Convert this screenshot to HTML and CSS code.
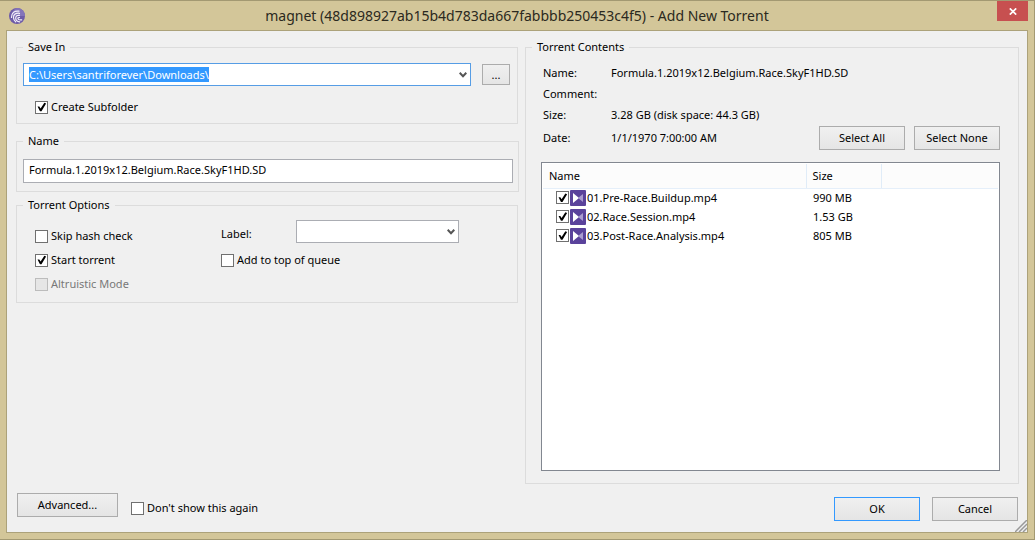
FILE: index.html
```
<!DOCTYPE html>
<html lang="en">
<head>
<meta charset="utf-8">
<title>Add New Torrent</title>
<link rel="stylesheet" href="styles.css">
</head>
<body>
<div class="window">
  <header class="titlebar">
    <svg class="app-icon" viewBox="0 0 16 16" aria-hidden="true">
      <circle cx="8" cy="8" r="8" fill="#6d5ba8"/>
      <path d="M8 0a8 8 0 0 1 8 8H3a8 8 0 0 1 5-8z" fill="#8474ba"/>
      <g fill="none" stroke="#f4f1fb" stroke-width="1.2" stroke-linecap="round">
        <path d="M10 3.2C5.500 2.500 2.200 5 2.500 9.500"/>
        <path d="M10.500 5.300C7 4.700 4.300 6.500 4.500 9.800c.1 1.700 1 3 2.200 4"/>
        <path d="M10.500 7.400C8.500 7 6.700 8 6.700 10c0 2 1.600 3.600 4 3.800"/>
        <path d="M10.500 9.500c-1-.1-1.700.3-1.600 1.100.2 1 1.800 1.500 3.800 1.200"/>
      </g>
    </svg>
    <h1 class="title">magnet (48d898927ab15b4d783da667fabbbb250453c4f5) - Add New Torrent</h1>
    <button class="close" type="button" aria-label="Close">
      <svg width="8" height="7" viewBox="0 0 8 7" aria-hidden="true"><path d="M.8.4l6.400 6.200M7.200.4L.8 6.600" stroke="#fff" stroke-width="1.700"/></svg>
    </button>
  </header>

  <form class="client">
    <div class="columns">
      <div class="column">
        <fieldset class="group save-in">
          <legend>Save In</legend>
          <div class="path-row">
            <div class="combo focused">
              <input id="path" class="field" type="text" role="combobox" aria-label="Save in folder" aria-expanded="false" value="C:\Users\santriforever\Downloads\">
              <svg class="chevron" viewBox="0 0 8 6" aria-hidden="true"><path d="M.7.8L4 4.300 7.300.8" fill="none" stroke="#555" stroke-width="2"/></svg>
            </div>
            <button class="button browse" type="button" aria-label="Browse">...</button>
          </div>
          <label class="check"><input type="checkbox" checked>Create Subfolder</label>
        </fieldset>

        <fieldset class="group name">
          <legend>Name</legend>
          <input class="field name-field" type="text" aria-label="Name" value="Formula.1.2019x12.Belgium.Race.SkyF1HD.SD">
        </fieldset>

        <fieldset class="group options">
          <legend>Torrent Options</legend>
          <div class="options-grid">
            <label class="check first"><input type="checkbox">Skip hash check</label>
            <div class="label-row">
              <label for="label">Label:</label>
              <div class="combo">
                <select id="label" class="field"><option></option></select>
                <svg class="chevron" viewBox="0 0 8 6" aria-hidden="true"><path d="M.7.8L4 4.300 7.300.8" fill="none" stroke="#555" stroke-width="2"/></svg>
              </div>
            </div>
            <label class="check"><input type="checkbox" checked>Start torrent</label>
            <label class="check"><input type="checkbox">Add to top of queue</label>
            <label class="check disabled"><input type="checkbox" disabled>Altruistic Mode</label>
          </div>
        </fieldset>
      </div>

      <fieldset class="group contents">
        <legend>Torrent Contents</legend>
        <div class="contents-body">
          <div class="summary">
            <dl class="details">
              <dt>Name:</dt><dd>Formula.1.2019x12.Belgium.Race.SkyF1HD.SD</dd>
              <dt>Comment:</dt><dd></dd>
              <dt>Size:</dt><dd>3.28 GB (disk space: 44.3 GB)</dd>
              <dt>Date:</dt><dd>1/1/1970 7:00:00 AM</dd>
            </dl>
            <div class="select-buttons">
              <button class="button" type="button">Select All</button>
              <button class="button" type="button">Select None</button>
            </div>
          </div>
          <div class="list">
            <table class="files">
              <thead>
                <tr><th class="col-name">Name</th><th class="col-size">Size</th><th></th></tr>
              </thead>
              <tbody>
                <tr>
                  <td><label class="file"><input type="checkbox" checked><svg class="file-icon" viewBox="0 0 16 16" aria-hidden="true"><rect width="16" height="16" rx="1" fill="#5a429b"/><path d="M3 3l6 5-6 5z" fill="#fff"/><path d="M13 4v8L8 8z" fill="#a99bd0"/></svg>01.Pre-Race.Buildup.mp4</label></td>
                  <td>990 MB</td><td></td>
                </tr>
                <tr>
                  <td><label class="file"><input type="checkbox" checked><svg class="file-icon" viewBox="0 0 16 16" aria-hidden="true"><rect width="16" height="16" rx="1" fill="#5a429b"/><path d="M3 3l6 5-6 5z" fill="#fff"/><path d="M13 4v8L8 8z" fill="#a99bd0"/></svg>02.Race.Session.mp4</label></td>
                  <td>1.53 GB</td><td></td>
                </tr>
                <tr>
                  <td><label class="file"><input type="checkbox" checked><svg class="file-icon" viewBox="0 0 16 16" aria-hidden="true"><rect width="16" height="16" rx="1" fill="#5a429b"/><path d="M3 3l6 5-6 5z" fill="#fff"/><path d="M13 4v8L8 8z" fill="#a99bd0"/></svg>03.Post-Race.Analysis.mp4</label></td>
                  <td>805 MB</td><td></td>
                </tr>
              </tbody>
            </table>
          </div>
        </div>
      </fieldset>
    </div>

    <footer class="footer">
      <div class="footer-left">
        <button class="button advanced" type="button">Advanced...</button>
        <label class="check"><input type="checkbox">Don't show this again</label>
      </div>
      <div class="footer-right">
        <button class="button primary" type="button">OK</button>
        <button class="button" type="button">Cancel</button>
      </div>
    </footer>
    <svg class="grip" viewBox="0 0 12 12" aria-hidden="true">
      <path d="M0 12L12 0M4 12l8-8M8 12l4-4" stroke="#999" stroke-width="1.500"/>
    </svg>
  </form>
</div>
<script src="main.js"></script>
</body>
</html>
```
FILE: styles.css
```
* {
  box-sizing: border-box;
}

body {
  margin: 0;
  font: 11px/16px "Noto Sans", "Open Sans", sans-serif;
  color: #000;
}

button,
input,
select {
  font: inherit;
  color: inherit;
  margin: 0;
  border-radius: 0;
}

.window {
  display: flex;
  flex-direction: column;
  min-height: 100vh;
  padding: 0 6px 6px;
  background: #d3c699;
  border: solid #a39972;
  border-width: 1px 1px 1px 0;
}

/* Title bar */
.titlebar {
  display: grid;
  grid-template-columns: 1fr auto 1fr;
  align-items: center;
  height: 29px;
}

.app-icon {
  width: 16px;
  height: 16px;
  margin-left: 3px;
}

.title {
  margin: 0;
  font-size: 14px;
  font-weight: 400;
  line-height: 20px;
  color: #2b2920;
  white-space: nowrap;
}

.close {
  display: flex;
  align-items: center;
  justify-content: center;
  justify-self: end;
  align-self: start;
  width: 31px;
  height: 20px;
  padding: 0;
  border: 0;
  background: #c75050;
}

/* Dialog body */
.client {
  position: relative;
  display: flex;
  flex-direction: column;
  flex: 1;
  padding: 8px 8px 11px 9px;
  background: #f0f0f0;
  border: 1px solid #aca27a;
}

.columns {
  display: grid;
  grid-template-columns: minmax(0, 503fr) minmax(0, 494fr);
  gap: 6px;
  flex: 1;
}

.group {
  min-width: 0;
  margin: 0;
  padding: 0;
  border: 1px solid #dcdcdc;
}

.group legend {
  height: 16px;
  padding: 0 5px;
}

.save-in {
  margin-right: 1px;
  padding: 8px 7px 4px 6px;
}

.name {
  margin-top: 9px;
  padding: 10px 5px 8px 6px;
}

.options {
  margin: 5px 1px 0 0;
  padding: 7px 6px 5px;
}

.path-row {
  display: flex;
  align-items: center;
  gap: 11px;
  margin-bottom: 9px;
}

.path-row .combo {
  flex: 1;
}

.save-in .check {
  margin-left: 12px;
}

.combo {
  position: relative;
  display: flex;
}

.field {
  width: 100%;
  height: 23px;
  padding: 0 5px;
  background: #fff;
  border: 1px solid #abadb3;
  outline: 0;
  appearance: none;
}

.focused .field {
  border-color: #569de5;
}

.field::selection {
  background: #39f;
  color: #fff;
}

.name-field {
  display: block;
  height: 24px;
  padding-bottom: 3px;
}

.chevron {
  position: absolute;
  top: 9px;
  right: 4px;
  width: 8px;
  height: 6px;
  pointer-events: none;
}

/* Check boxes */
.check {
  display: flex;
  align-items: center;
  gap: 3px;
  height: 24px;
}

input[type="checkbox"] {
  flex: none;
  width: 13px;
  height: 13px;
  appearance: none;
  background: #fff;
  border: 1px solid #707070;
}

input[type="checkbox"]:checked::after {
  content: "";
  display: block;
  width: 11px;
  height: 11px;
  background: #000;
  clip-path: polygon(14% 46%, 30% 46%, 42% 64%, 76% 12%, 92% 18%, 50% 88%, 36% 88%);
}

input[type="checkbox"]:disabled {
  background: #e6e6e6;
  border-color: #bcbcbc;
}

.disabled {
  color: #787878;
}

.options-grid {
  display: grid;
  grid-template-columns: 186px 1fr;
  grid-template-rows: 28px 24px 25px;
  margin-left: 12px;
}

.first {
  align-self: end;
}

.label-row {
  display: flex;
  align-items: center;
  align-self: start;
}

.label-row label {
  width: 75px;
  padding-top: 4px;
}

.label-row .combo {
  width: 163px;
}

/* Buttons */
.button {
  width: 86px;
  height: 24px;
  padding: 0;
  background: linear-gradient(#f0f0f0, #e5e5e5);
  border: 1px solid #acacac;
}

.browse {
  width: 28px;
  height: 21px;
}

.advanced {
  width: 101px;
}

.primary {
  border-color: #39f;
}

/* Torrent contents */
.contents {
  padding: 8px 18px 12px 6px;
}

.contents-body {
  display: flex;
  flex-direction: column;
  gap: 12px;
  height: 100%;
  margin-left: 9px;
}

.summary {
  display: flex;
  align-items: flex-end;
}

.details {
  display: grid;
  flex: 1;
  grid-template-columns: 68px minmax(0, 1fr);
  grid-template-rows: 20px 20px 20px 24px;
  row-gap: 1px;
  align-items: center;
  min-width: 0;
  margin: 0;
  padding-left: 2px;
  white-space: nowrap;
}

.details dd {
  margin: 0;
}

.select-buttons {
  display: flex;
  gap: 9px;
}

.list {
  flex: 1;
  padding: 1px;
  background: #fff;
  border: 1px solid #828790;
}

.files {
  width: 100%;
  border-collapse: collapse;
  table-layout: fixed;
}

.files th {
  height: 24px;
  padding: 0 6px;
  font-weight: 400;
  text-align: left;
  background: #fcfcfc;
  border-bottom: 1px solid #e5effa;
}

.files th + th {
  border-left: 1px solid #e0ecf8;
}

.files .col-name {
  width: 263px;
}

.files .col-size {
  width: 75px;
}

.files td {
  height: 19px;
  padding: 0 7px;
}

.files td:first-child {
  padding-left: 13px;
}

.file {
  display: flex;
  align-items: center;
  gap: 1px;
}

.file-icon {
  width: 16px;
  height: 16px;
}

/* Footer */
.footer {
  display: flex;
  justify-content: space-between;
  padding: 9px 1px 0;
}

.footer-left {
  display: flex;
  align-items: flex-start;
  gap: 13px;
}

.footer-left .check {
  margin-top: 3px;
}

.footer-right {
  display: flex;
  gap: 12px;
  margin-top: 4px;
}

.grip {
  position: absolute;
  right: 0;
  bottom: 0;
  width: 12px;
  height: 12px;
}
```
FILE: main.js
```
const path = document.getElementById("path");
path.focus();
path.select();
```
